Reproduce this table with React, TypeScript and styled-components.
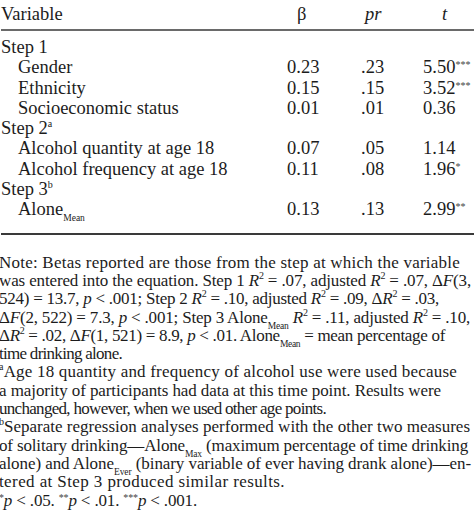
import { ReactNode, useLayoutEffect, useRef, useState } from 'react';
import styled, { createGlobalStyle } from 'styled-components';

const SERIF = '"Liberation Serif", serif';

const GlobalStyle = createGlobalStyle`
  body {
    margin: 0;
    font-family: ${SERIF};
    color: #1c1c1c;
    background: #ffffff;
  }
`;

type Row =
  | { kind: 'step'; label: string; mark?: string }
  | {
      kind: 'var';
      label: string;
      sub?: string;
      beta: string;
      pr: string;
      t: string;
      stars?: string;
    };

const rows: Row[] = [
  { kind: 'step', label: 'Step 1' },
  { kind: 'var', label: 'Gender', beta: '0.23', pr: '.23', t: '5.50', stars: '***' },
  { kind: 'var', label: 'Ethnicity', beta: '0.15', pr: '.15', t: '3.52', stars: '***' },
  { kind: 'var', label: 'Socioeconomic status', beta: '0.01', pr: '.01', t: '0.36' },
  { kind: 'step', label: 'Step 2', mark: 'a' },
  { kind: 'var', label: 'Alcohol quantity at age 18', beta: '0.07', pr: '.05', t: '1.14' },
  { kind: 'var', label: 'Alcohol frequency at age 18', beta: '0.11', pr: '.08', t: '1.96', stars: '*' },
  { kind: 'step', label: 'Step 3', mark: 'b' },
  { kind: 'var', label: 'Alone', sub: 'Mean', beta: '0.13', pr: '.13', t: '2.99', stars: '**' },
];

const R2 = () => (
  <>
    <i>R</i>
    <Sup>2</Sup>
  </>
);

// each note line is set to the width it has in the printed table
function FitLine({ target, children }: { target: number; children: ReactNode }) {
  const ref = useRef<HTMLDivElement>(null);
  const [spacing, setSpacing] = useState(0);

  useLayoutEffect(() => {
    const measure = () => {
      const el = ref.current;
      if (!el) return;
      const prev = el.style.letterSpacing;
      el.style.letterSpacing = '0px';
      const w = el.getBoundingClientRect().width;
      el.style.letterSpacing = prev;
      const n = (el.textContent || '').length;
      setSpacing((target - w) / Math.max(n, 1));
    };
    measure();
    document.fonts?.ready.then(measure);
  }, [target]);

  return (
    <Line ref={ref} style={{ letterSpacing: `${spacing}px` }}>
      {children}
    </Line>
  );
}

export default function App() {
  return (
    <>
      <GlobalStyle />
      <Page>
        <Table>
          <HeadRow>
            <Cell>Variable</Cell>
            <HeadCell $offset={10}>β</HeadCell>
            <HeadCell $offset={4}>
              <i>pr</i>
            </HeadCell>
            <HeadCell $offset={19}>
              <i>t</i>
            </HeadCell>
          </HeadRow>
          <Body>
            {rows.map((row, i) =>
              row.kind === 'step' ? (
                <BodyRow key={i}>
                  <Cell>
                    {row.label}
                    {row.mark && <Sup>{row.mark}</Sup>}
                  </Cell>
                </BodyRow>
              ) : (
                <BodyRow key={i}>
                  <Cell $indent>
                    {row.label}
                    {row.sub && <Sub>{row.sub}</Sub>}
                  </Cell>
                  <Cell>{row.beta}</Cell>
                  <Cell>{row.pr}</Cell>
                  <Cell>
                    {row.t}
                    {row.stars && <Stars>{row.stars}</Stars>}
                  </Cell>
                </BodyRow>
              )
            )}
          </Body>
        </Table>
        <Notes>
          <FitLine target={461}>
            Note: Betas reported are those from the step at which the variable
          </FitLine>
          <FitLine target={472}>
            was entered into the equation. Step 1 <R2 /> = .07, adjusted <R2 /> = .07, Δ<i>F</i>(3,
          </FitLine>
          <FitLine target={440}>
            524) = 13.7, <i>p</i> &lt; .001; Step 2 <R2 /> = .10, adjusted <R2 /> = .09, Δ<R2 /> = .03,
          </FitLine>
          <FitLine target={471}>
            Δ<i>F</i>(2, 522) = 7.3, <i>p</i> &lt; .001; Step 3 Alone<Sub>Mean</Sub> <R2 /> = .11, adjusted{' '}
            <R2 /> = .10,
          </FitLine>
          <FitLine target={446}>
            Δ<R2 /> = .02, Δ<i>F</i>(1, 521) = 8.9, <i>p</i> &lt; .01. Alone<Sub>Mean</Sub> = mean percentage of
          </FitLine>
          <FitLine target={123}>time drinking alone.</FitLine>
          <FitLine target={458}>
            <Sup>a</Sup>Age 18 quantity and frequency of alcohol use were used because
          </FitLine>
          <FitLine target={442}>
            a majority of participants had data at this time point. Results were
          </FitLine>
          <FitLine target={327}>unchanged, however, when we used other age points.</FitLine>
          <FitLine target={471}>
            <Sup>b</Sup>Separate regression analyses performed with the other two measures
          </FitLine>
          <FitLine target={469}>
            of solitary drinking—Alone<Sub>Max</Sub> (maximum percentage of time drinking
          </FitLine>
          <FitLine target={472}>
            alone) and Alone<Sub>Ever</Sub> (binary variable of ever having drank alone)—en-
          </FitLine>
          <FitLine target={286}>tered at Step 3 produced similar results.</FitLine>
          <FitLine target={198}>
            <Stars>*</Stars>
            <i>p</i> &lt; .05. <Stars>**</Stars>
            <i>p</i> &lt; .01. <Stars>***</Stars>
            <i>p</i> &lt; .001.
          </FitLine>
        </Notes>
      </Page>
    </>
  );
}

const Page = styled.div`
  width: 474px;
  height: 510px;
  overflow: hidden;
  font-family: ${SERIF};
`;

const Table = styled.div`
  display: flex;
  flex-direction: column;
  padding-left: 1px;
  font-size: 18.5px;
`;

const HeadRow = styled.div`
  display: grid;
  grid-template-columns: 286px 74px 62px 1fr;
  align-items: baseline;
  height: 29px;
  line-height: 29px;
  border-bottom: 2px solid #6a6a6a;
`;

const Body = styled.div`
  padding: 6px 0 13px;
  border-bottom: 2px solid #3a3a3a;
`;

const BodyRow = styled.div`
  display: grid;
  grid-template-columns: 286px 74px 62px 1fr;
  align-items: baseline;
  height: 20.3px;
  line-height: 20.3px;
`;

const Cell = styled.div<{ $indent?: boolean }>`
  font-family: ${SERIF};
  white-space: nowrap;
  padding-left: ${({ $indent }) => ($indent ? '17px' : '0')};
`;

const HeadCell = styled.div<{ $offset: number }>`
  font-family: ${SERIF};
  padding-left: ${({ $offset }) => $offset}px;
`;

const Sup = styled.sup`
  font-size: 10px;
  line-height: 0;
  vertical-align: 7px;
`;

const Sub = styled.sub`
  font-size: 9.5px;
  line-height: 0;
  vertical-align: -6px;
`;

const Stars = styled.sup`
  font-size: 10px;
  line-height: 0;
  vertical-align: 5px;
  color: #444;
`;

const Notes = styled.div`
  padding-top: 19px;
  margin-left: -1px;
  font-size: 17px;
`;

const Line = styled.div`
  font-family: ${SERIF};
  white-space: nowrap;
  width: max-content;
  height: 18.3px;
  line-height: 18.3px;
`;
